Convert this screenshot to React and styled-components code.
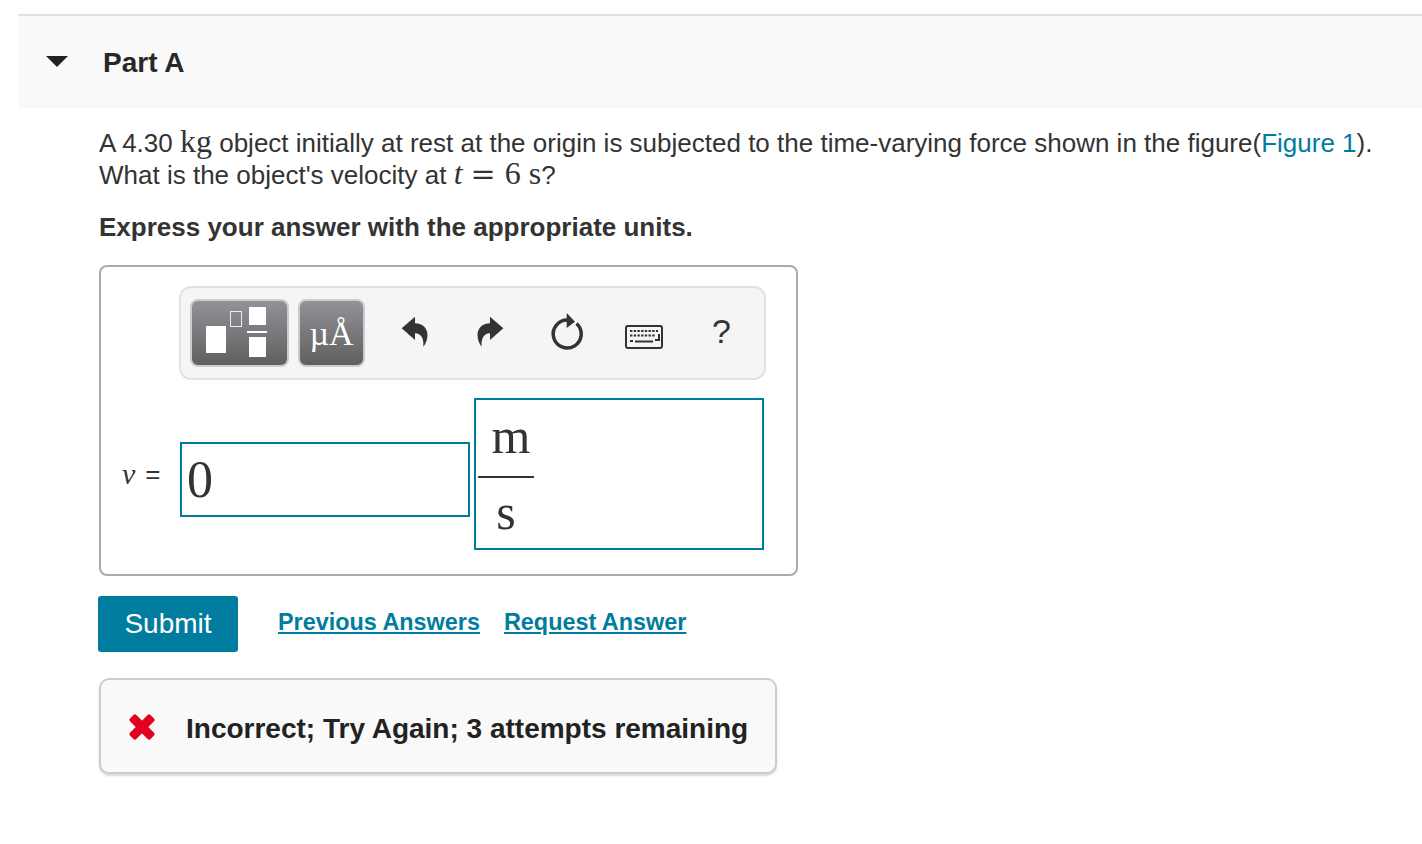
import React from 'react'
import styled, { createGlobalStyle } from 'styled-components'

const GlobalStyle = createGlobalStyle`
  html, body {
    margin: 0;
    padding: 0;
    background: #fff;
    font-family: "Liberation Sans", Arial, sans-serif;
    color: #333;
  }
`

function App() {
  return (
    <>
      <GlobalStyle />
      <Page>
        <PartHeader>
          <Caret />
          <PartTitle>Part A</PartTitle>
        </PartHeader>

        <PartBody>
          <Question>
            A 4.30 <Unit>kg</Unit> object initially at rest at the origin is subjected to the
            time-varying force shown in the figure(<FigureLink>Figure 1</FigureLink>).
            <br />
            What is the object's velocity at <Unit><i>t</i><MathEquals>=</MathEquals>6 s</Unit>?
          </Question>
          <Instruction>Express your answer with the appropriate units.</Instruction>

          <AnswerBox>
            <Toolbar>
              <TemplateButton>
                <svg width="94" height="64" viewBox="0 0 94 64">
                  <rect x="13" y="25" width="20" height="27" fill="#fff" />
                  <rect x="37.500" y="10.500" width="11" height="15" fill="none" stroke="#eee" />
                  <rect x="56" y="6" width="17" height="18" fill="#fff" />
                  <rect x="54" y="30" width="20" height="2" fill="#fff" />
                  <rect x="56" y="36" width="17" height="20" fill="#fff" />
                </svg>
              </TemplateButton>
              <SymbolButton>µÅ</SymbolButton>
              <FirstToolIcon>
                <svg width="30" height="34" viewBox="0 0 30 34">
                  <path d="M2.700 12.300 L16 .7 V7.300 C24 7.300 28.500 13 28.500 19 C28.500 24 26.500 28 24.300 30.700 C25 24 23 17.300 16 17.300 V24 Z" fill="#333" />
                </svg>
              </FirstToolIcon>
              <ToolIcon>
                <svg width="30" height="34" viewBox="0 0 30 34">
                  <path d="M27.300 12.300 L14 .7 V7.300 C6 7.300 1.500 13 1.500 19 C1.500 24 3.500 28 5.700 30.700 C5 24 7 17.300 14 17.300 V24 Z" fill="#333" />
                </svg>
              </ToolIcon>
              <ToolIcon>
                <svg width="36" height="40" viewBox="0 0 36 40">
                  <path d="M18 7 A14 14 0 1 0 26.500 10.500" fill="none" stroke="#333" strokeWidth="3.500" />
                  <path d="M16.700 0 L25 8.700 L16.700 15 Z" fill="#333" />
                </svg>
              </ToolIcon>
              <ToolIcon>
                <KeyboardIcon width="38" height="24" viewBox="0 0 38 24">
                  <rect x="1" y="1" width="36" height="22" rx="2" fill="#f5f5f5" stroke="#333" strokeWidth="2" />
                  <path d="M5 6 H33 M5 10.500 H30" stroke="#333" strokeWidth="2.200" strokeDasharray="2.400 1.300" fill="none" />
                  <path d="M10 16.500 H28 M5 16 H8 M30 15 H34 V9" stroke="#333" strokeWidth="2" fill="none" />
                </KeyboardIcon>
              </ToolIcon>
              <HelpIcon>?</HelpIcon>
            </Toolbar>

            <EntryRow>
              <VarLabel><i>v</i><Equals>=</Equals></VarLabel>
              <ValueInput>0</ValueInput>
              <UnitsInput>
                <Fraction>
                  <Numerator>m</Numerator>
                  <Denominator>s</Denominator>
                </Fraction>
              </UnitsInput>
            </EntryRow>
          </AnswerBox>

          <Actions>
            <SubmitButton type="button">Submit</SubmitButton>
            <ActionLink>Previous Answers</ActionLink>
            <ActionLink>Request Answer</ActionLink>
          </Actions>

          <Feedback>
            <svg width="28" height="28" viewBox="0 0 28 28">
              <rect x="-0.500" y="9.500" width="29" height="9" rx="2" fill="#e1001f" transform="rotate(45 14 14)" />
              <rect x="-0.500" y="9.500" width="29" height="9" rx="2" fill="#e1001f" transform="rotate(-45 14 14)" />
            </svg>
            <FeedbackText>Incorrect; Try Again; 3 attempts remaining</FeedbackText>
          </Feedback>
        </PartBody>
      </Page>
    </>
  )
}

export default App

const Page = styled.div`
  width: 1422px;
  height: 844px;
  padding: 14px 0 0 18px;
  box-sizing: border-box;
  overflow: hidden;
`

const PartHeader = styled.div`
  display: flex;
  align-items: center;
  height: 92px;
  border-top: 2px solid #e2e2e2;
  background: #f9f9f9;
  padding-left: 28px;
`

const Caret = styled.span`
  width: 0;
  height: 0;
  margin: -2px 35px 0 0;
  border-left: 11px solid transparent;
  border-right: 11px solid transparent;
  border-top: 11px solid #222;
`

const PartTitle = styled.h2`
  margin: 1px 0 0;
  font-size: 28px;
  font-weight: 700;
  color: #272727;
`

const PartBody = styled.div`
  padding: 19px 0 0 81px;
`

const Question = styled.p`
  margin: 0;
  width: 1300px;
  font-size: 26px;
  line-height: 32px;
  color: #333;
`

const Unit = styled.span`
  font-family: "Liberation Serif", serif;
  font-size: 32px;
  line-height: 0;

  i {
    font-style: italic;
  }
`

const MathEquals = styled.span`
  margin: 0 9px 0 8px;
  font-family: "DejaVu Serif", serif;
  font-size: 30px;
`

const FigureLink = styled.span`
  color: #007c9e;
`

const Instruction = styled.p`
  margin: 20px 0 0;
  font-size: 26px;
  line-height: 32px;
  font-weight: 700;
  color: #333;
`

const AnswerBox = styled.div`
  box-sizing: border-box;
  width: 699px;
  height: 311px;
  margin: 22px 0 0;
  border: 2px solid #aaa;
  border-radius: 8px;
  padding: 19px 32px 0 79px;
`

const Toolbar = styled.div`
  box-sizing: border-box;
  display: flex;
  align-items: center;
  width: 587px;
  height: 94px;
  margin-left: -1px;
  padding-left: 9px;
  background: #f5f5f5;
  border: 2px solid #e2e2e2;
  border-radius: 12px;
`

const GreyButton = styled.div`
  box-sizing: border-box;
  display: flex;
  align-items: center;
  justify-content: center;
  height: 68px;
  border: 2px solid #ccc;
  border-radius: 8px;
  background: linear-gradient(#959199, #5f5f5f);
  color: #fff;
`

const TemplateButton = styled(GreyButton)`
  width: 99px;
  margin-right: 9px;
`

const SymbolButton = styled(GreyButton)`
  width: 67px;
  padding-top: 2px;
  font-family: "Liberation Serif", serif;
  font-size: 34px;
`

const ToolIcon = styled.div`
  display: flex;
  align-items: center;
  justify-content: center;
  width: 77px;
  height: 50px;
`

const FirstToolIcon = styled(ToolIcon)`
  margin-left: 10px;
`

const KeyboardIcon = styled.svg`
  margin: 7px 2px 0 0;
`

const HelpIcon = styled.div`
  width: 77px;
  margin-top: -4px;
  text-align: center;
  font-size: 34px;
  color: #333;
`

const EntryRow = styled.div`
  display: flex;
  align-items: flex-start;
  gap: 4px;
  margin-top: 18px;
  margin-left: -60px;
`

const VarLabel = styled.div`
  display: flex;
  width: 56px;
  padding-left: 2px;
  box-sizing: border-box;
  font-family: "Liberation Serif", serif;
  font-size: 30px;
  line-height: 152px;
  color: #333;
`

const Equals = styled.span`
  margin-left: 10px;
  font-family: "Liberation Sans", sans-serif;
  font-size: 26px;
`

const EntryBox = styled.div`
  box-sizing: border-box;
  flex: none;
  width: 290px;
  border: 2px solid #007c9e;
  font-family: "Liberation Serif", serif;
  color: #333;
`

const ValueInput = styled(EntryBox)`
  height: 75px;
  margin-top: 44px;
  padding: 6px 0 0 5px;
  font-size: 52px;
  line-height: 60px;
`

const UnitsInput = styled(EntryBox)`
  height: 152px;
  padding: 8px 0 0 2px;
`

const Fraction = styled.div`
  display: inline-flex;
  flex-direction: column;
  width: 56px;
  font-size: 50px;
  line-height: 56px;
`

const Numerator = styled.span`
  height: 68px;
  padding-left: 10px;
  text-align: center;
  border-bottom: 2px solid #333;
`

const Denominator = styled.span`
  text-align: center;
  padding-top: 6px;
`

const Actions = styled.div`
  display: flex;
  align-items: center;
  margin: 20px 0 0 -1px;
  height: 56px;
`

const SubmitButton = styled.button`
  width: 140px;
  height: 56px;
  margin-right: 40px;
  border: none;
  border-radius: 3px;
  background: #007c9e;
  color: #fff;
  font-family: "Liberation Sans", sans-serif;
  font-size: 28px;
`

const ActionLink = styled.a`
  margin-right: 24px;
  margin-top: -4px;
  font-size: 23.400px;
  font-weight: 700;
  color: #007c9e;
  text-decoration: underline;
`

const Feedback = styled.div`
  box-sizing: border-box;
  display: flex;
  align-items: center;
  gap: 30px;
  width: 678px;
  height: 96px;
  margin: 26px 0 0;
  padding-left: 27px;
  background: #f9f9f9;
  border: 2px solid #ccc;
  border-radius: 10px;
  box-shadow: 0 2px 2px rgba(0, 0, 0, 0.15);

  svg {
    margin-top: 2px;
  }
`

const FeedbackText = styled.span`
  margin-top: 5px;
  font-size: 28px;
  font-weight: 700;
  color: #222;
`
